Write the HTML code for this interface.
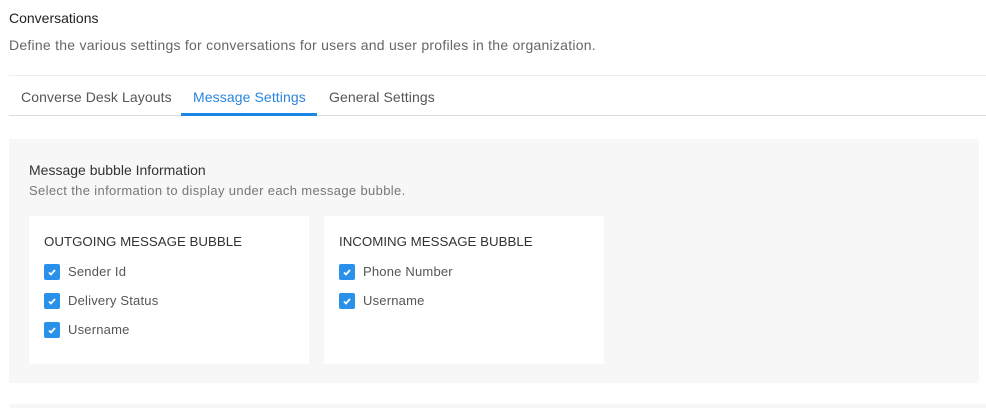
<!DOCTYPE html><html><head><style>
body{margin:0;width:986px;height:408px;background:#fff;font-family:"Liberation Sans",sans-serif;position:relative;overflow:hidden}
.a{position:absolute;white-space:nowrap}
.cb{position:absolute;width:16px;height:16px;background:#2a91ea;border-radius:2px}
.cb svg{position:absolute;left:3px;top:3px}
.lbl{position:absolute;font-size:13px;color:#555;letter-spacing:0.2px}
.card{position:absolute;top:216px;width:280px;height:148px;background:#fff}
.h{position:absolute;left:15px;top:18px;font-size:13.3px;color:#333}
</style></head><body>
<div class="a" style="left:9px;top:10px;font-size:14px;color:#222">Conversations</div>
<div class="a" style="left:9px;top:37px;font-size:14px;color:#666;letter-spacing:0.25px">Define the various settings for conversations for users and user profiles in the organization.</div>
<div class="a" style="left:9px;top:75px;width:977px;height:1px;background:#ececec"></div>
<div class="a" style="left:21px;top:89px;font-size:14px;color:#555;letter-spacing:0.1px">Converse Desk Layouts</div>
<div class="a" style="left:193px;top:89px;font-size:14px;color:#2a85e0;letter-spacing:0.1px">Message Settings</div>
<div class="a" style="left:329px;top:89px;font-size:14px;color:#555;letter-spacing:0.1px">General Settings</div>
<div class="a" style="left:9px;top:115px;width:977px;height:1px;background:#dcdcdc"></div>
<div class="a" style="left:181px;top:113px;width:136px;height:3px;background:#1b86e6"></div>
<div class="a" style="left:9px;top:139px;width:970px;height:244px;background:#f7f7f7"></div>
<div class="a" style="left:29px;top:162px;font-size:14px;color:#333">Message bubble Information</div>
<div class="a" style="left:29px;top:183px;font-size:13px;color:#777;letter-spacing:0.35px">Select the information to display under each message bubble.</div>
<div class="card" style="left:29px"><div class="h">OUTGOING MESSAGE BUBBLE</div>
<div class="cb" style="left:15px;top:48px"><svg width="10" height="10" viewBox="0 0 10 10"><path d="M2 5.5L4 7.5L8 3" stroke="#fff" stroke-width="1.8" fill="none"/></svg></div><div class="lbl" style="left:39px;top:48px">Sender Id</div>
<div class="cb" style="left:15px;top:77px"><svg width="10" height="10" viewBox="0 0 10 10"><path d="M2 5.5L4 7.5L8 3" stroke="#fff" stroke-width="1.8" fill="none"/></svg></div><div class="lbl" style="left:39px;top:77px">Delivery Status</div>
<div class="cb" style="left:15px;top:106px"><svg width="10" height="10" viewBox="0 0 10 10"><path d="M2 5.5L4 7.5L8 3" stroke="#fff" stroke-width="1.8" fill="none"/></svg></div><div class="lbl" style="left:39px;top:106px">Username</div>
</div>
<div class="card" style="left:324px"><div class="h">INCOMING MESSAGE BUBBLE</div>
<div class="cb" style="left:15px;top:48px"><svg width="10" height="10" viewBox="0 0 10 10"><path d="M2 5.5L4 7.5L8 3" stroke="#fff" stroke-width="1.8" fill="none"/></svg></div><div class="lbl" style="left:39px;top:48px">Phone Number</div>
<div class="cb" style="left:15px;top:77px"><svg width="10" height="10" viewBox="0 0 10 10"><path d="M2 5.5L4 7.5L8 3" stroke="#fff" stroke-width="1.8" fill="none"/></svg></div><div class="lbl" style="left:39px;top:77px">Username</div>
</div>
<div class="a" style="left:9px;top:404px;width:977px;height:4px;background:#f7f7f7"></div>
</body></html>
